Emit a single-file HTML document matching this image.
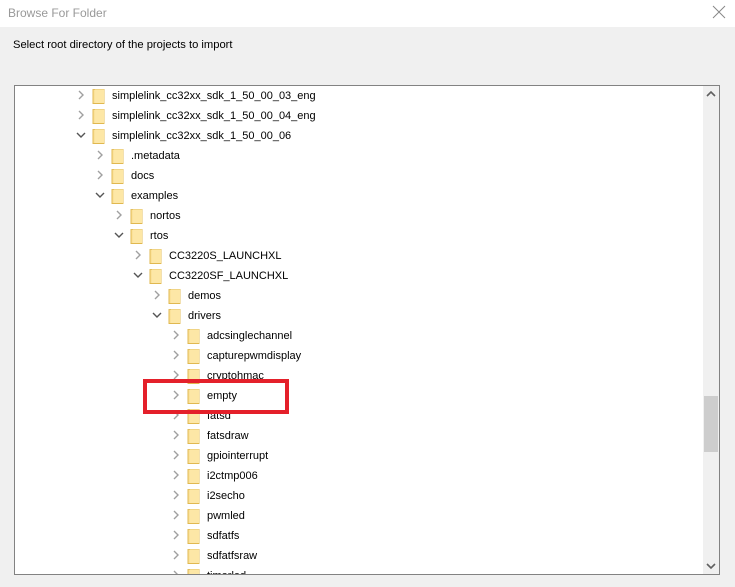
<!DOCTYPE html><html><head><style>
body{margin:0;width:735px;height:587px;background:#f0f0f0;font-family:"Liberation Sans",sans-serif;position:relative;overflow:hidden}
.title{position:absolute;left:0;top:0;width:735px;height:27px;background:#fff;}
.title span{position:absolute;left:8px;top:6px;font-size:12px;color:#999}
.x{position:absolute;left:712px;top:5px}
.lbl{position:absolute;left:13px;top:39px;font-size:11.2px;color:#000}
.box{position:absolute;left:14px;top:85px;width:704px;height:488px;border:1px solid #828282;background:#fff;overflow:hidden}
.sb{position:absolute;right:0;top:0;width:16px;height:100%;background:#f0f0f0}
.thumb{position:absolute;left:1px;top:310px;width:14px;height:56px;background:#cdcdcd}
.row{position:absolute;height:20px;font-size:11px;line-height:20px;color:#000;white-space:nowrap}
.row svg{position:absolute;top:0}
.row .t{position:absolute;top:0}
.red{position:absolute;left:143px;top:379px;width:138px;height:27px;border:4px solid #e4202a}
</style></head><body>
<div class="title"><span>Browse For Folder</span>
<svg class="x" width="14" height="14"><path d="M1 1L13 13M13 1L1 13" stroke="#888" stroke-width="1"/></svg></div>
<div class="lbl">Select root directory of the projects to import</div>
<div class="box" id="b">
<div class="sb"><svg width="16" height="16" style="position:absolute;top:0"><path d="M4 10L8 6L12 10" stroke="#606060" stroke-width="1.6" fill="none"/></svg>
<div class="thumb"></div>
<svg width="16" height="16" style="position:absolute;bottom:0"><path d="M4 6L8 10L12 6" stroke="#606060" stroke-width="1.6" fill="none"/></svg></div>
</div>
<div class="red"></div>
<script>
var items=[[0,0,"simplelink_cc32xx_sdk_1_50_00_03_eng"],[0,0,"simplelink_cc32xx_sdk_1_50_00_04_eng"],[0,1,"simplelink_cc32xx_sdk_1_50_00_06"],[1,0,".metadata"],[1,0,"docs"],[1,1,"examples"],[2,0,"nortos"],[2,1,"rtos"],[3,0,"CC3220S_LAUNCHXL"],[3,1,"CC3220SF_LAUNCHXL"],[4,0,"demos"],[4,1,"drivers"],[5,0,"adcsinglechannel"],[5,0,"capturepwmdisplay"],[5,0,"cryptohmac"],[5,0,"empty"],[5,0,"fatsd"],[5,0,"fatsdraw"],[5,0,"gpiointerrupt"],[5,0,"i2ctmp006"],[5,0,"i2secho"],[5,0,"pwmled"],[5,0,"sdfatfs"],[5,0,"sdfatfsraw"],[5,0,"timerled"]];
var b=document.getElementById('b'),h='';
items.forEach(function(it,i){var x=60+it[0]*19,y=0+i*20;
var chev=it[1]?'<path d="M2 7L6 11L10 7" stroke="#555" stroke-width="1.4" fill="none"/>':'<path d="M4 5L8 9L4 13" stroke="#a0a0a0" stroke-width="1.4" fill="none"/>';
h+='<div class="row" style="left:'+x+'px;top:'+y+'px"><svg width="12" height="20" style="left:0">'+chev+'</svg>'+
'<svg width="14" height="20" style="left:17px"><rect x="1" y="3.5" width="11" height="14" fill="#fbe29a" stroke="#e4c062"/><rect x="3" y="3.5" width="9" height="14" fill="#fde7a6"/><path d="M1 3.5V17.5H12" stroke="#e0b850" fill="none"/></svg>'+
'<span class="t" style="left:37px">'+it[2]+'</span></div>';});
b.insertAdjacentHTML('afterbegin',h);
</script>
</body></html>
